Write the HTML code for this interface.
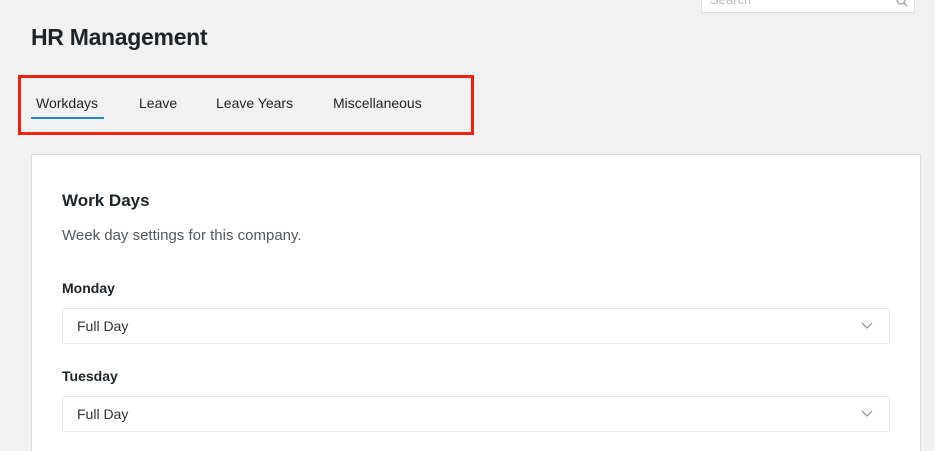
<!DOCTYPE html>
<html><head><style>
html,body{margin:0;width:935px;height:451px;overflow:hidden}
body{background:#f1f1f1;font-family:"Liberation Sans",sans-serif;position:relative;color:#1d2327}
.a{position:absolute}
.search{left:701px;top:-2px;width:212px;height:13px;background:#fff;border:1px solid #ddd;border-radius:2px;overflow:hidden}
h1{position:absolute;left:31px;top:24px;margin:0;font-size:23px;font-weight:600;letter-spacing:-0.3px}
.red{left:18px;top:75px;width:450px;height:54px;border:3px solid #f21f0a}
.tab{top:95px;font-size:14px;color:#1d2327}
.ul{left:31px;top:117px;width:73px;height:2px;background:#2087cc}
.card{left:31px;top:154px;width:888px;height:300px;background:#fff;border:1px solid #dcdcde}
.sel{left:62px;width:826px;height:34px;border:1px solid #e4e6ea;border-radius:3px;background:#fff}
.sel span{position:absolute;left:14px;top:9px;font-size:14px;color:#2c3338}
.sel svg{position:absolute;right:16px;top:13px}
.lbl{left:62px;font-size:14px;font-weight:bold}
</style></head><body>
<div class="a search"><span style="position:absolute;left:8px;top:-7px;font-size:13px;color:#bbb">Search</span><svg style="position:absolute;right:6px;top:-4px" width="12" height="12"><circle cx="5" cy="5" r="4" stroke="#aaa" fill="none" stroke-width="1.5"/><path d="M8 8l3 3" stroke="#aaa" stroke-width="1.5"/></svg></div>
<h1>HR Management</h1>
<div class="a red"></div>
<div class="a tab" style="left:36px">Workdays</div>
<div class="a tab" style="left:139px">Leave</div>
<div class="a tab" style="left:216px">Leave Years</div>
<div class="a tab" style="left:333px">Miscellaneous</div>
<div class="a ul"></div>
<div class="a card"></div>
<div class="a" style="left:62px;top:191px;font-size:17px;font-weight:bold">Work Days</div>
<div class="a" style="left:62px;top:227px;font-size:15px;color:#50575e">Week day settings for this company.</div>
<div class="a lbl" style="top:280px">Monday</div>
<div class="a sel" style="top:308px"><span>Full Day</span><svg width="12" height="8"><path d="M1 1l5 5 5-5" stroke="#999" fill="none" stroke-width="1.3"/></svg></div>
<div class="a lbl" style="top:368px">Tuesday</div>
<div class="a sel" style="top:396px"><span>Full Day</span><svg width="12" height="8"><path d="M1 1l5 5 5-5" stroke="#999" fill="none" stroke-width="1.3"/></svg></div>
</body></html>
